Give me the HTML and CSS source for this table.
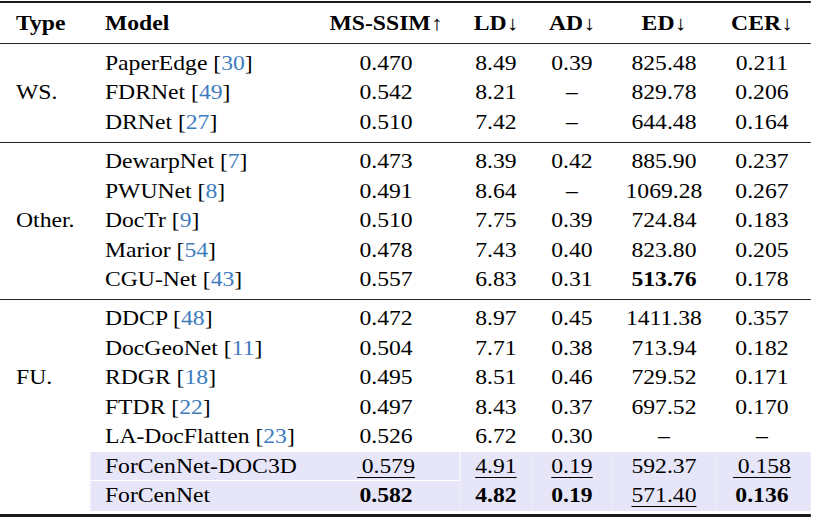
FILE: index.html
```html
<!DOCTYPE html>
<html>
<head>
<meta charset="utf-8">
<link rel="stylesheet" href="styles.css">
</head>
<body>
<div class="tbl">
  <div class="grid head">
    <div class="type">Type</div>
    <div class="model">Model</div>
    <div class="num">MS-SSIM<span class="arr">↑</span></div>
    <div class="num">LD<span class="arr">↓</span></div>
    <div class="num">AD<span class="arr">↓</span></div>
    <div class="num">ED<span class="arr">↓</span></div>
    <div class="num cer">CER<span class="arr">↓</span></div>
  </div>

  <div class="grid sec sec1">
    <div class="type span3">WS.</div>
    <div class="model">PaperEdge [<span class="ref">30</span>]</div>
    <div class="num">0.470</div><div class="num">8.49</div><div class="num">0.39</div><div class="num">825.48</div><div class="num cer">0.211</div>
    <div class="model">FDRNet [<span class="ref">49</span>]</div>
    <div class="num">0.542</div><div class="num">8.21</div><div class="num">–</div><div class="num">829.78</div><div class="num cer">0.206</div>
    <div class="model">DRNet [<span class="ref">27</span>]</div>
    <div class="num">0.510</div><div class="num">7.42</div><div class="num">–</div><div class="num">644.48</div><div class="num cer">0.164</div>
  </div>

  <div class="grid sec sec2">
    <div class="type span5">Other.</div>
    <div class="model">DewarpNet [<span class="ref">7</span>]</div>
    <div class="num">0.473</div><div class="num">8.39</div><div class="num">0.42</div><div class="num">885.90</div><div class="num cer">0.237</div>
    <div class="model">PWUNet [<span class="ref">8</span>]</div>
    <div class="num">0.491</div><div class="num">8.64</div><div class="num">–</div><div class="num">1069.28</div><div class="num cer">0.267</div>
    <div class="model">DocTr [<span class="ref">9</span>]</div>
    <div class="num">0.510</div><div class="num">7.75</div><div class="num">0.39</div><div class="num">724.84</div><div class="num cer">0.183</div>
    <div class="model">Marior [<span class="ref">54</span>]</div>
    <div class="num">0.478</div><div class="num">7.43</div><div class="num">0.40</div><div class="num">823.80</div><div class="num cer">0.205</div>
    <div class="model">CGU-Net [<span class="ref">43</span>]</div>
    <div class="num">0.557</div><div class="num">6.83</div><div class="num">0.31</div><div class="num"><b>513.76</b></div><div class="num cer">0.178</div>
  </div>

  <div class="grid sec sec3">
    <div class="type span5">FU.</div>
    <div class="model">DDCP [<span class="ref">48</span>]</div>
    <div class="num">0.472</div><div class="num">8.97</div><div class="num">0.45</div><div class="num">1411.38</div><div class="num cer">0.357</div>
    <div class="model">DocGeoNet [<span class="ref">11</span>]</div>
    <div class="num">0.504</div><div class="num">7.71</div><div class="num">0.38</div><div class="num">713.94</div><div class="num cer">0.182</div>
    <div class="model">RDGR [<span class="ref">18</span>]</div>
    <div class="num">0.495</div><div class="num">8.51</div><div class="num">0.46</div><div class="num">729.52</div><div class="num cer">0.171</div>
    <div class="model">FTDR [<span class="ref">22</span>]</div>
    <div class="num">0.497</div><div class="num">8.43</div><div class="num">0.37</div><div class="num">697.52</div><div class="num cer">0.170</div>
    <div class="model">LA-DocFlatten [<span class="ref">23</span>]</div>
    <div class="num">0.526</div><div class="num">6.72</div><div class="num">0.30</div><div class="num">–</div><div class="num cer">–</div>

    <div class="type span2"></div>
    <div class="model hl sep-b">ForCenNet-DOC3D</div>
    <div class="num hl sep-br"><span class="u">&#8201;0.579</span></div>
    <div class="num hl"><span class="u">4.91</span></div>
    <div class="num hl"><span class="u">0.19</span></div>
    <div class="num hl">592.37</div>
    <div class="num cer hl"><span class="u">&#8201;0.158</span></div>
    <div class="model hl">ForCenNet</div>
    <div class="num hl"><b>0.582</b></div>
    <div class="num hl"><b>4.82</b></div>
    <div class="num hl"><b>0.19</b></div>
    <div class="num hl"><span class="u">571.40</span></div>
    <div class="num cer hl"><b>0.136</b></div>
  </div>
</div>
</body>
</html>
```

FILE: styles.css
```css
html, body {
  margin: 0;
  padding: 0;
  background: #ffffff;
}

body {
  font-family: "Liberation Serif", "Times New Roman", serif;
  font-size: 20.4px;
  color: #000000;
}

.tbl {
  width: 699.1px;
  margin-top: 1px;
  border-top: 2px solid #1a1a1a;
  border-bottom: 3px solid #1a1a1a;
  transform: scaleX(1.16);
  transform-origin: 0 0;
}

.grid {
  display: grid;
  grid-template-columns: 77.6px 191.4px 127.6px 62px 69px 89.6px 81.9px;
}

.head {
  height: 40px;
  align-items: center;
  font-weight: bold;
  white-space: nowrap;
}

.arr {
  font-weight: normal;
}

.sec {
  grid-auto-rows: 29.5px;
  line-height: 29.5px;
  border-top: 1px solid #222222;
  white-space: nowrap;
}

.sec1 {
  padding: 4.75px 0;
}

.sec2 {
  padding: 4.25px 0;
}

.sec3 {
  padding: 4.25px 0 3.5px;
}

.type {
  padding-left: 13.8px;
  align-self: center;
}

.span2 { grid-row: span 2; align-self: stretch; }
.span3 { grid-row: span 3; }
.span5 { grid-row: span 5; }

.model {
  padding-left: 12.9px;
}

.num {
  text-align: center;
}

.cer {
  padding-right: 2.5px;
}

.ref {
  color: #3d7cbd;
}

.hl {
  background: #e6e6f8;
}

.sep-b {
  box-shadow: inset 0 -1px 0 #ffffff;
}

.sep-br {
  box-shadow: inset -1px -1px 0 #ffffff;
}

.u {
  text-decoration: underline;
  text-decoration-thickness: 1px;
  text-underline-offset: 4px;
}
```
